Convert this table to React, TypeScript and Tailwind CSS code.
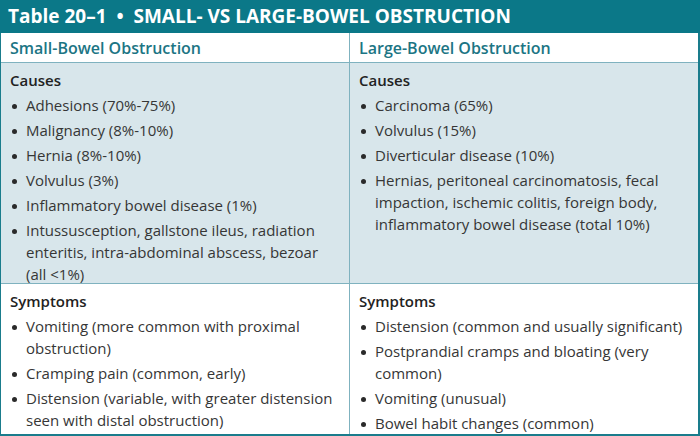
import React from "react";

type Section = {
  label: string;
  items: React.ReactNode[];
};

const left: { causes: Section; symptoms: Section } = {
  causes: {
    label: "Causes",
    items: [
      "Adhesions (70%-75%)",
      "Malignancy (8%-10%)",
      "Hernia (8%-10%)",
      "Volvulus (3%)",
      "Inflammatory bowel disease (1%)",
      <>
        Intussusception, gallstone ileus, radiation
        <br />
        enteritis, intra-abdominal abscess, bezoar
        <br />
        (all &lt;1%)
      </>,
    ],
  },
  symptoms: {
    label: "Symptoms",
    items: [
      <>
        Vomiting (more common with proximal
        <br />
        obstruction)
      </>,
      "Cramping pain (common, early)",
      <>
        Distension (variable, with greater distension
        <br />
        seen with distal obstruction)
      </>,
    ],
  },
};

const right: { causes: Section; symptoms: Section } = {
  causes: {
    label: "Causes",
    items: [
      "Carcinoma (65%)",
      "Volvulus (15%)",
      "Diverticular disease (10%)",
      <>
        Hernias, peritoneal carcinomatosis, fecal
        <br />
        impaction, ischemic colitis, foreign body,
        <br />
        inflammatory bowel disease (total 10%)
      </>,
    ],
  },
  symptoms: {
    label: "Symptoms",
    items: [
      "Distension (common and usually significant)",
      <>
        Postprandial cramps and bloating (very
        <br />
        common)
      </>,
      "Vomiting (unusual)",
      "Bowel habit changes (common)",
    ],
  },
};

function Cell({ section }: { section: Section }) {
  return (
    <div className="pl-[9px] pr-2 pt-[6px]">
      <div className="text-[15px] leading-[22px] font-semibold text-[#222]">{section.label}</div>
      <ul className="mt-[3px] flex flex-col gap-[3px]">
        {section.items.map((item, i) => (
          <li key={i} className="flex text-[15px] leading-[22px] text-[#363636]">
            <span className="w-[16px] shrink-0 h-[22px] flex items-center pl-[2px] pt-[2px]">
              <span className="block w-[5px] h-[5px] rounded-full bg-[#2a2a2a]" />
            </span>
            <span className="whitespace-nowrap">{item}</span>
          </li>
        ))}
      </ul>
    </div>
  );
}

export default function App() {
  return (
    <div
      className="w-[700px] h-[436px] bg-white overflow-hidden"
      style={{ fontFamily: '"Open Sans", "Liberation Sans", sans-serif' }}
    >
      <div className="h-[33px] bg-[#0b7888] px-[8px] flex items-center text-white text-[19px] font-bold">
        Table 20–1&nbsp;&nbsp;•&nbsp;&nbsp;SMALL- VS LARGE-BOWEL OBSTRUCTION
      </div>
      <div className="h-[403px] border-l border-r-2 border-b-2 border-[#1a7c8c] grid grid-cols-[349px_1fr] grid-rows-[30px_221px_1fr]">
        <div className="border-r border-b border-[#7fb2bf] px-[9px] flex items-center text-[16px] font-semibold text-[#1c7584]">
          Small-Bowel Obstruction
        </div>
        <div className="border-b border-[#7fb2bf] px-[9px] flex items-center text-[16px] font-semibold text-[#1c7584]">
          Large-Bowel Obstruction
        </div>
        <div className="bg-[#d8e6eb] border-r border-b border-[#7fb2bf]">
          <Cell section={left.causes} />
        </div>
        <div className="bg-[#d8e6eb] border-b border-[#7fb2bf]">
          <Cell section={right.causes} />
        </div>
        <div className="border-r border-[#7fb2bf]">
          <Cell section={left.symptoms} />
        </div>
        <div>
          <Cell section={right.symptoms} />
        </div>
      </div>
    </div>
  );
}
